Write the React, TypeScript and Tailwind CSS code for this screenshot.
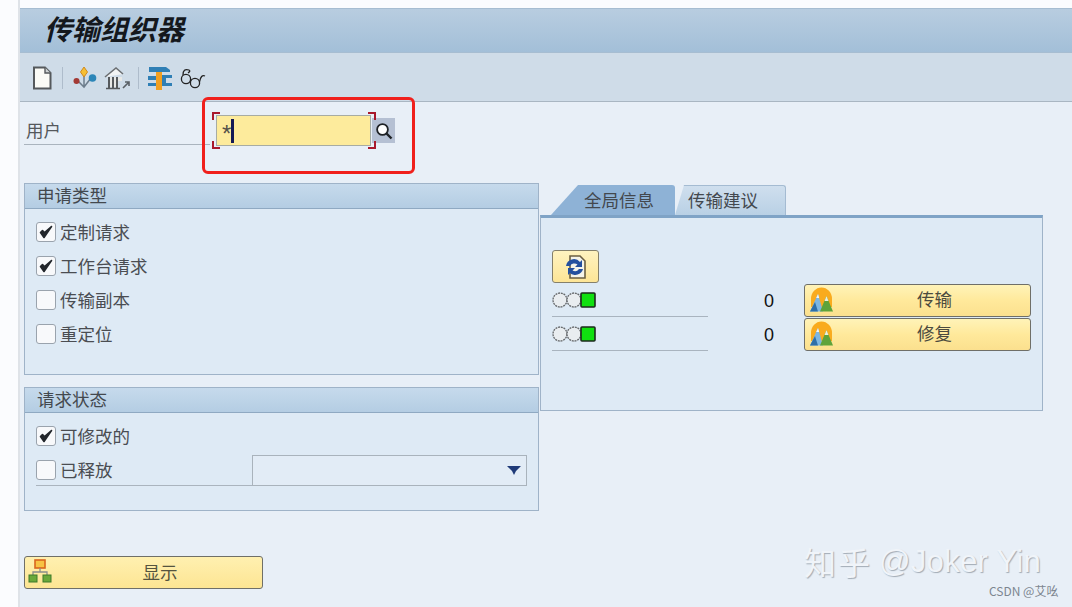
import React from "react";

const cjk = "font-['Noto_Sans_CJK_SC','Liberation_Sans',sans-serif]";

function Check({ checked, label }: { checked?: boolean; label: string }) {
  return (
    <div className="flex h-[34px] items-center gap-[4px] pl-[11px]">
      <span className="flex h-[20px] w-[20px] items-center justify-center rounded-[3px] border border-[#9aa3ad] bg-[#f8f9fb]">
        {checked && (
          <svg width="14" height="14" viewBox="0 0 14 14">
            <path d="M1.5 7.5 L5 12.5 L12.5 1.5 L5.5 7.5 L3.5 5.5 Z" fill="#22262b" stroke="#22262b" strokeWidth="1.6" strokeLinejoin="round" />
          </svg>
        )}
      </span>
      <span className="text-[17.5px] leading-none text-[#4a4d52]">{label}</span>
    </div>
  );
}

function GroupBox({ title, className, children }: { title: string; className: string; children: React.ReactNode }) {
  return (
    <section className={`border border-[#9fb3c8] bg-[#deeaf5] ${className}`}>
      <div className="flex h-[25px] items-center border-b border-[#8fa9c2] bg-gradient-to-b from-[#c6daec] to-[#b4cde3] pb-[2px] pl-[12px] text-[17.5px] leading-none text-[#43484e]">
        {title}
      </div>
      {children}
    </section>
  );
}

function Mountain() {
  return (
    <svg width="23" height="25" viewBox="0 0 23 25" className="shrink-0">
      <path d="M1 12 A10.5 11.5 0 0 1 22 12 L22 20 L1 20 Z" fill="#f9ab1e" />
      <path d="M0 24.5 L8 7 L13 24.5 Z" fill="#7db6e2" />
      <path d="M0 24.5 L5 15 L8 24.5 Z" fill="#2f6fa8" />
      <path d="M10 24.5 L16.5 9 L23 24.5 Z" fill="#5fa33a" />
      <path d="M14.5 14 L16.5 9 L18.5 14 Z" fill="#e9f0e2" />
      <path d="M6.2 11 L8 7 L9.2 11 Z" fill="#eef6fc" />
    </svg>
  );
}

function Lights() {
  return (
    <svg width="44" height="16" viewBox="0 0 44 16" className="shrink-0">
      <circle cx="8" cy="8" r="7" fill="#e9edf0" stroke="#66696c" strokeWidth="1.3" strokeDasharray="2 0.8" />
      <circle cx="22" cy="8" r="7" fill="#e9edf0" stroke="#66696c" strokeWidth="1.3" strokeDasharray="2 0.8" />
      <rect x="29" y="1" width="14" height="14" rx="1" fill="#10e010" stroke="#1d2a1d" strokeWidth="1.6" />
    </svg>
  );
}

function StatusRow({ label }: { label: string }) {
  return (
    <div className="flex h-[34px] items-center">
      <div className="flex h-[34px] w-[156px] items-center border-b border-[#a9b4bf]">
        <Lights />
      </div>
      <span className="w-[66px] pt-[2px] text-right font-['Liberation_Sans',sans-serif] text-[18px] leading-none text-[#111]">0</span>
      <button className="ml-[30px] flex h-[33px] w-[227px] items-center rounded-[3px] border border-[#6f6f68] bg-gradient-to-b from-[#fff3b8] via-[#ffe99b] to-[#fbe08e] pb-[1px] pl-[5px] text-[17.5px] leading-none text-[#4b4a3f]">
        <Mountain />
        <span className="ml-[84px] pb-[2px]">{label}</span>
      </button>
    </div>
  );
}

export default function App() {
  return (
    <div className={`relative flex h-[607px] w-[1072px] overflow-hidden bg-[#fbfcfe] ${cjk}`}>
      <div className="w-[18px] shrink-0" />
      <main className="flex min-w-0 flex-1 flex-col border-l-2 border-[#dfe3e8] pt-[8px]">
        <header className="flex h-[45px] shrink-0 items-center border-y border-[#a7bdd1] bg-gradient-to-b from-[#b8cde0] to-[#a3bfd8] pb-[5px] pl-[24px] text-[28px] font-bold italic leading-none text-[#14181d]">
          传输组织器
        </header>
        <nav className="flex h-[49px] shrink-0 items-center border-b border-[#a9b6c2] bg-[#cfdce8] pl-[12px] pt-[1px]">
          <svg width="20" height="24" viewBox="0 0 20 24">
            <path d="M2 1.5 H13 L18.5 7 V22.5 H2 Z" fill="#fbfbf6" stroke="#55595c" strokeWidth="2" />
            <path d="M13 1.5 V7 H18.5" fill="#cfd3d4" stroke="#55595c" strokeWidth="1.4" />
          </svg>
          <span className="ml-[10px] h-[22px] w-px bg-[#aebccb]" />
          <svg width="26" height="24" viewBox="0 0 26 24" className="ml-[9px]">
            <path d="M12 9 V21 M5 14 L12 21 L19 12" fill="none" stroke="#6d7d8c" strokeWidth="1.5" />
            <path d="M12 1 L15.5 6 L12 11 L8.5 6 Z" fill="#f6bf33" stroke="#d08a1e" />
            <circle cx="20.5" cy="12" r="3.8" fill="#2c86b8" />
            <circle cx="4.5" cy="15" r="3" fill="#a33a35" />
          </svg>
          <svg width="28" height="24" viewBox="0 0 28 24" className="ml-[6px]">
            <path d="M1 11 L12 2 L19 8" fill="#f2f4f4" stroke="#6b6f73" strokeWidth="1.6" />
            <path d="M4 21 V11 H18 V15 H13 V21 Z" fill="#e7e8e6" />
            <path d="M5 11 V22 M9 11 V22 M13 11 V22" stroke="#55595c" strokeWidth="2" />
            <path d="M2 22.5 H16" stroke="#55595c" strokeWidth="1.5" />
            <path d="M19 22 L25 16 M21 16 H25 V20" fill="none" stroke="#5a6066" strokeWidth="1.6" />
          </svg>
          <span className="ml-[6px] h-[22px] w-px bg-[#aebccb]" />
          <svg width="26" height="26" viewBox="0 0 26 26" className="ml-[8px]">
            <path d="M2 2 H19 L23 5 V7 H2 Z" fill="#2f7fb5" />
            <rect x="9" y="7" width="6" height="18" fill="#f1a021" />
            <path d="M1 11 H9 V15 H1 Z M1 18 H9 V21 H1 Z" fill="#2f7fb5" />
            <path d="M15 10 H25 V13 H19 V18 H25 V21 H15 Z" fill="#2f7fb5" />
          </svg>
          <svg width="26" height="22" viewBox="0 0 26 22" className="ml-[7px]">
            <circle cx="6" cy="12" r="4.6" fill="none" stroke="#222" strokeWidth="1.3" />
            <circle cx="15" cy="16" r="4.6" fill="none" stroke="#222" strokeWidth="1.3" />
            <path d="M10.4 13 L10.8 14 M3 8 Q3 1 9 3 Q11 4 8 6 M19.5 15 Q21 7 25 9" fill="none" stroke="#222" strokeWidth="1.3" />
          </svg>
        </nav>

        <div className="flex flex-1 flex-col bg-[#e8eff7] pl-[4px]">
          <div className="flex h-[81px] shrink-0 items-start pt-[13px]">
            <div className="flex h-[30px] w-[186px] shrink-0 items-center border-b border-[#aab4be] pl-[2px] text-[17.5px] leading-none text-[#55585c]">
              用户
            </div>
            <div className="relative ml-[6px] flex h-[31px] w-[155px] items-center border border-[#a7aca3] bg-[#fdeb9c] pl-[5px] font-['Liberation_Sans',sans-serif] text-[24px] leading-none text-[#55524a]">
              <span className="pt-[6px]">*</span>
              <span className="h-[24px] w-[3px] bg-[#141a55]" />
              <span className="absolute -left-[5px] -top-[4px] h-[8px] w-[8px] border-l-2 border-t-2 border-[#a8192c]" />
              <span className="absolute -right-[6px] -top-[4px] h-[8px] w-[8px] border-r-2 border-t-2 border-[#a8192c]" />
              <span className="absolute -bottom-[4px] -left-[5px] h-[8px] w-[8px] border-b-2 border-l-2 border-[#a8192c]" />
              <span className="absolute -bottom-[4px] -right-[6px] h-[8px] w-[8px] border-b-2 border-r-2 border-[#a8192c]" />
            </div>
            <div className="ml-px mt-[3px] flex h-[25px] w-[23px] items-center justify-center bg-[#b5c0d3]">
              <svg width="18" height="18" viewBox="0 0 18 18">
                <circle cx="7.5" cy="7.5" r="5.4" fill="#fff" stroke="#1f2226" strokeWidth="1.8" />
                <path d="M11.5 11.5 L16.5 16.5" stroke="#1f2226" strokeWidth="2.4" />
              </svg>
            </div>
          </div>

          <div className="flex items-start">
            <div className="flex w-[515px] shrink-0 flex-col">
              <GroupBox title="申请类型" className="h-[192px]">
                <div className="pt-[6px]">
                  <Check checked label="定制请求" />
                  <Check checked label="工作台请求" />
                  <Check label="传输副本" />
                  <Check label="重定位" />
                </div>
              </GroupBox>
              <GroupBox title="请求状态" className="mt-[12px] h-[124px]">
                <div className="pt-[6px]">
                  <Check checked label="可修改的" />
                  <div className="flex items-start">
                    <div className="ml-[11px] h-[33px] w-[216px] shrink-0 border-b border-[#aab4be] [&>div]:pl-0">
                      <Check label="已释放" />
                    </div>
                    <div className="mt-[2px] flex h-[31px] w-[275px] items-center justify-end border border-[#a9b3bc] bg-[#e2ecf6] pr-[5px]">
                      <svg width="14" height="9" viewBox="0 0 14 9">
                        <path d="M0 0 H14 L9 5 L7 9 L5 5 Z" fill="#1f3a78" />
                      </svg>
                    </div>
                  </div>
                </div>
              </GroupBox>
            </div>

            <div className="ml-px mt-[2px] flex w-[503px] shrink-0 flex-col">
              <div className="flex h-[30px] items-end pl-[11px]">
                <div className="flex h-[30px] w-[124px] items-center rounded-tr-[3px] bg-[#8eb2d6] pb-[1px] pl-[33px] text-[17.5px] leading-none text-[#43484e] [clip-path:polygon(27px_0,100%_0,100%_100%,0_100%)]">
                  全局信息
                </div>
                <div className="flex h-[30px] w-[111px] items-center rounded-tr-[3px] border-r border-t border-[#a4bbd2] bg-gradient-to-b from-[#cfdfee] to-[#b9d0e5] pb-[1px] pl-[13px] text-[17.5px] leading-none text-[#43484e] [clip-path:polygon(9px_0,100%_0,100%_100%,0_100%)]">
                  传输建议
                </div>
              </div>
              <div className="h-[196px] border border-t-[3px] border-[#9fb3c8] border-t-[#7fa3c6] bg-[#deeaf5] pl-[11px] pt-[32px]">
                <button className="flex h-[33px] w-[47px] items-center justify-center rounded-[3px] border border-[#85806b] bg-gradient-to-b from-[#fff3c0] to-[#fde596]">
                  <svg width="26" height="26" viewBox="0 0 26 26">
                    <path d="M7 2 H17 L22 7 V24 H7 Z" fill="#f5f4ea" stroke="#6b5f43" strokeWidth="1.6" />
                    <path d="M3 12 A8 8 0 0 1 17 8 L19 6 V13 H12 L14.5 10.5 A5 5 0 0 0 7 12 Z" fill="#24509f" />
                    <path d="M20 15 A8 8 0 0 1 7 19 L5 21 V14 H12 L9.5 16.5 A5 5 0 0 0 16 15 Z" fill="#24509f" />
                  </svg>
                </button>
                <StatusRow label="传输" />
                <StatusRow label="修复" />
              </div>
            </div>
          </div>

          <div className="mt-[45px]">
            <button className="relative flex h-[33px] w-[239px] items-center justify-center rounded-[3px] border border-[#6f6f68] bg-gradient-to-b from-[#fff0b0] to-[#fde593] pb-[2px] text-[17.5px] leading-none text-[#55543f]">
              <svg width="24" height="24" viewBox="0 0 24 24" className="absolute left-[3px] top-[2px]">
                <rect x="7" y="1" width="10" height="8" fill="#f7c244" stroke="#d9651e" strokeWidth="1.6" />
                <path d="M12 9 V13 M5 16 V13 H19 V16" fill="none" stroke="#8b8f8b" strokeWidth="1.3" />
                <rect x="1" y="16" width="8" height="7" fill="#6aa83a" stroke="#3d7a2a" />
                <rect x="15" y="16" width="8" height="7" fill="#6aa83a" stroke="#3d7a2a" />
              </svg>
              <span className="ml-[33px]">显示</span>
            </button>
          </div>
        </div>
      </main>

      {/* Annotation drawn over the screenshot */}
      <div className="absolute left-[202px] top-[97px] h-[77px] w-[213px] rounded-[6px] border-[3px] border-[#f0201c]" />

      {/* Watermarks */}
      <div className="absolute left-[804px] top-[545px] flex items-center text-[32px] leading-none text-[#f0f4f9] [text-shadow:1px_1px_1px_#a2abb5]">
        <span className="tracking-[2px]">知乎</span>
        <span className="ml-[7px] font-['Liberation_Sans',sans-serif] text-[31px] tracking-[0.3px]">@Joker Yin</span>
      </div>
      <div className="absolute left-[989px] top-[585px] text-[12px] leading-none text-[#7d8690]">CSDN @艾吆</div>
    </div>
  );
}
